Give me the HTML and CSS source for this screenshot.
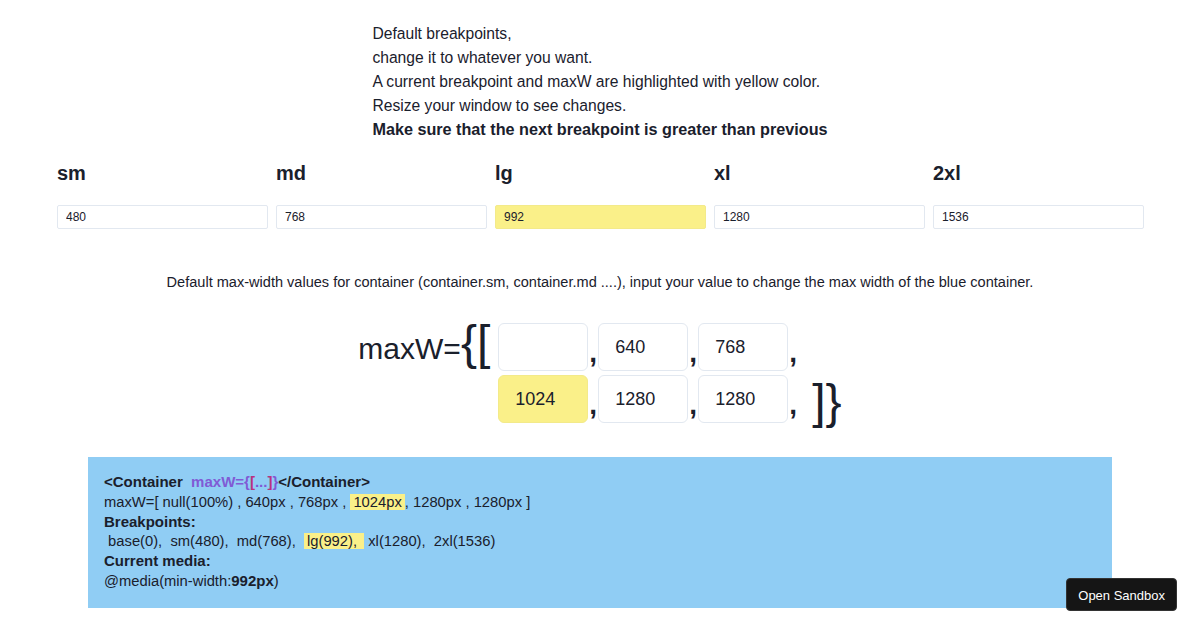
FILE: index.html
```html
<!DOCTYPE html>
<html lang="en">
<head>
  <meta charset="UTF-8">
  <title>Container maxW playground</title>
  <link rel="stylesheet" href="styles.css">
</head>
<body>
  <div class="intro">
    <p>Default breakpoints,</p>
    <p>change it to whatever you want.</p>
    <p>A current breakpoint and maxW are highlighted with yellow color.</p>
    <p>Resize your window to see changes.</p>
    <p><strong>Make sure that the next breakpoint is greater than previous</strong></p>
  </div>

  <div class="breakpoints">
    <div class="bp">
      <h2>sm</h2>
      <input class="bp-input" type="text" value="480">
    </div>
    <div class="bp">
      <h2>md</h2>
      <input class="bp-input" type="text" value="768">
    </div>
    <div class="bp">
      <h2>lg</h2>
      <input class="bp-input active" type="text" value="992">
    </div>
    <div class="bp">
      <h2>xl</h2>
      <input class="bp-input" type="text" value="1280">
    </div>
    <div class="bp">
      <h2>2xl</h2>
      <input class="bp-input" type="text" value="1536">
    </div>
  </div>

  <p class="desc">Default max-width values for container (container.sm, container.md ....), input your value to change the max width of the blue container.</p>

  <div class="maxw">
    <div class="maxw-label">maxW=<span class="brace">{[</span></div>
    <div class="maxw-grid">
      <div class="cell"><input class="mw-input" type="text" value=""><span class="comma">,</span></div>
      <div class="cell"><input class="mw-input" type="text" value="640"><span class="comma">,</span></div>
      <div class="cell"><input class="mw-input" type="text" value="768"><span class="comma">,</span></div>
      <div class="cell"><input class="mw-input active" type="text" value="1024"><span class="comma">,</span></div>
      <div class="cell"><input class="mw-input" type="text" value="1280"><span class="comma">,</span></div>
      <div class="cell"><input class="mw-input" type="text" value="1280"><span class="comma">,</span></div>
    </div>
    <div class="maxw-close">]}</div>
  </div>

  <div class="box">
    <div><strong>&lt;Container&nbsp; <span class="purple">maxW={</span><span class="pink">[</span><span class="purple">...</span><span class="pink">]</span><span class="purple">}</span>&lt;/Container&gt;</strong></div>
    <div>maxW=[ null(100%) , 640px , 768px , <mark>1024px</mark>, 1280px , 1280px ]</div>
    <div><strong>Breakpoints:</strong></div>
    <div class="pre"> base(0),  sm(480),  md(768),  <mark>lg(992), </mark> xl(1280),  2xl(1536)</div>
    <div><strong>Current media:</strong></div>
    <div>@media(min-width:<strong>992px</strong>)</div>
  </div>

  <a class="sandbox" href="#">Open Sandbox</a>
</body>
</html>
```

FILE: styles.css
```css
body { margin: 0; padding-top: 22px; font-family: "Liberation Sans", Arial, sans-serif; color: #1a202c; background: #fff; }
p { margin: 0; }

.intro { width: fit-content; margin: 0 auto; font-size: 15.65px; line-height: 24px; }
.intro strong { font-size: 16.2px; line-height: 1; }

.breakpoints { display: grid; grid-template-columns: repeat(5, 1fr); gap: 8px; padding: 0 56px 0 57px; margin-top: 19px; }
.bp h2 { margin: 0 0 20px; font-size: 20px; line-height: 24px; font-weight: 700; }
.bp-input { display: block; width: 100%; box-sizing: border-box; height: 24px; padding: 0 8px; font: 12px "Liberation Sans", Arial, sans-serif; color: #1a202c; border: 1px solid #e2e8f0; border-radius: 2px; background: #fff; outline: none; }
.bp-input.active, .mw-input.active { background: #faf089; border-color: #f3ea8a; }

.desc { margin-top: 43px; text-align: center; font-size: 14.55px; line-height: 20px; }

.maxw { display: flex; justify-content: center; margin-top: 31px; }
.maxw-label { font-size: 30px; line-height: 48px; margin: -4px 8px 0 0; white-space: nowrap; }
.brace { font-size: 48px; }
.maxw-grid { display: grid; grid-template-columns: repeat(3, 100px); row-gap: 4px; }
.cell { display: flex; align-items: flex-end; }
.mw-input { width: 90px; height: 48px; box-sizing: border-box; padding: 0 16px; font: 18px "Liberation Sans", Arial, sans-serif; color: #1a202c; border: 1px solid #e2e8f0; border-radius: 6px; background: #fff; outline: none; }
.comma { width: 10px; font-size: 28px; line-height: 28px; font-weight: 700; text-align: center; padding-bottom: 4px; }
.maxw-close { align-self: flex-end; margin: 0 0 -3px 14px; font-size: 48px; line-height: 48px; }

.box { max-width: 1024px; margin: 34px auto 0; box-sizing: border-box; padding: 16px; background: #90cdf4; font-size: 14.75px; line-height: 19.8px; }
.box strong { font-size: 15px; line-height: 1; }
.box mark { background: #faf089; color: inherit; padding: 0 3px; }
.pre { white-space: pre; }
.purple { color: #805ad5; }
.pink { color: #b83280; }

.sandbox { position: fixed; right: 23px; bottom: 19px; padding: 0 11px; height: 33px; line-height: 33px; background: #151515; color: #fff; font-size: 13px; border-radius: 4px; text-decoration: none; border: 1px solid #333; box-sizing: border-box; }
```
